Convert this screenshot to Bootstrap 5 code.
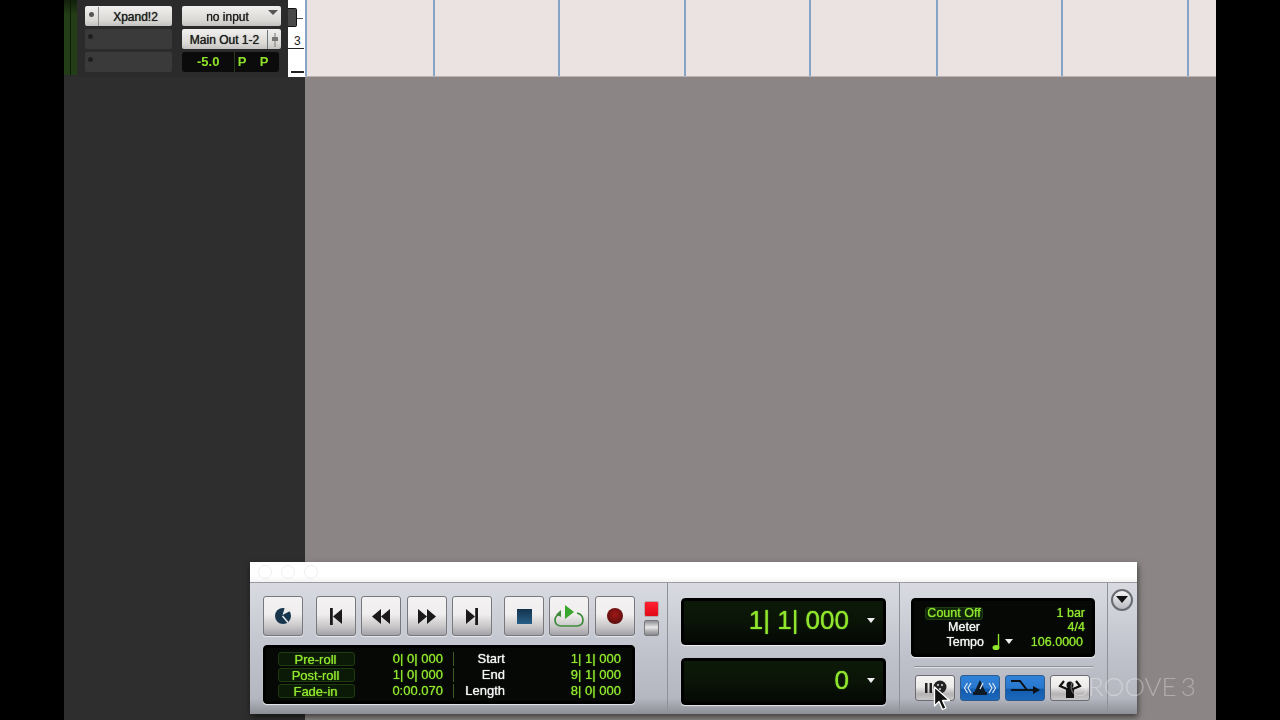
<!doctype html>
<html lang="en">
<head>
<meta charset="utf-8">
<title>Pro Tools transport</title>
<link rel="stylesheet" href="https://cdn.jsdelivr.net/npm/bootstrap@5.3.0/dist/css/bootstrap.min.css">
<style>
html,body{margin:0;height:720px;overflow:hidden;background:#000;font-family:"Liberation Sans",Arial,sans-serif}
.stage{width:1152px;height:720px;margin-left:64px;position:relative;filter:blur(.4px)}
.top-row{height:77px}
.strip{width:224px;background:#2b2b2b}
.meter{width:13px;height:75px;gap:1px;background:#0d1a08}
.meter div{flex:1;background:linear-gradient(#12200a 0,#233d16 20%,#233d16 100%)}
.inserts{width:87px;margin-left:8px;margin-top:6px;gap:3px}
.outs{width:99px;margin-left:10px;margin-top:6px;gap:3px}
.slot{height:20px;border-radius:2px;background:#3a3a3a;font-size:12px;color:#1c1c1c}
.slot.on{background:linear-gradient(#f2f0ee,#dbd9d6 70%,#c4c2c0);text-shadow:0 0 .8px #222;padding-top:1px}
.slot .dotcell{width:14px;height:100%;border-right:1px solid #8d8d8d}
.slot .dot{width:5px;height:5px;border-radius:50%;background:#555;margin-bottom:5px}
.slot.off .dotcell{border:0}
.slot.off .dot{background:#1f1f1f;margin-left:3px}
.vol{height:20px;width:97px;background:#0b0b0b;border-radius:3px;color:#8fe32b;font-size:13px;font-weight:700}
.vol span:first-child{width:52px;padding-left:15px}
.ruler{width:17px;background:#fff;position:relative;font-size:12px;color:#222}
.tab{width:9px;height:19px;margin-top:8px;background:#484848;border:1px solid #111;border-left:0;border-radius:0 2px 2px 0}
.tab-tick{position:absolute;left:9px;top:18px;width:6px;height:1px;background:#555}
.ruler .num{height:22px;line-height:29px;padding-left:6px;border-bottom:1px solid #222;margin-right:1px}
.ruler .tick2{height:1.5px;width:13px;margin:22px 0 0 3px;background:#222}
.bars{flex:1;display:grid;grid-template-columns:127.5px 125px 126px 125px 127px 125px 126px 1fr;background:#ebe2e2;border-bottom:1px solid #b9b3b2}
.bars div{border-left:2px solid #86a4c6}
.bottom{height:643px}
.dark{width:241px;background:#2e2e2e}
.gray{flex:1;background:#8b8685}
.transport{position:absolute;left:186px;top:562px;width:887px;height:152px;box-shadow:1px 3px 6px rgba(0,0,0,.55)}
.titlebar{height:21px;background:linear-gradient(#fff,#fff 70%,#f4f4f4);border-bottom:1px solid #9a9ba0;gap:9px;padding-left:8px}
.titlebar i{width:14px;height:14px;border-radius:50%;border:1px solid #f1eeee;display:block}
.tbody{height:131px;background:linear-gradient(#d8dae0 0,#d4d6dd 12%,#bfc2cb 55%,#b4b7c0 88%,#8d8f96 100%)}
.sec1{width:418px;padding:13px 0 0 13px;border-right:1px solid #8f9198}
.sec2{width:232px;padding:15px 0 0 13px;border-right:1px solid #8f9198}
.sec3{width:208px;padding:15px 0 0 11px;border-right:1px solid #8f9198}
.sec4{flex:1;padding:6px 0 0 3px}
.tbtn{width:40px;height:40px;padding:0;border:1px solid #77777e;border-radius:3px;background:linear-gradient(#f3f1f1,#f0eeee 45%,#c9c6c8 78%,#a3a2a8);box-shadow:0 1px 1px rgba(255,255,255,.6)}
.tbtn:hover{background:linear-gradient(#f3f1f1,#f0eeee 45%,#c9c6c8 78%,#a3a2a8);border-color:#77777e}
.g1{gap:5.3px}
.ml13{margin-left:7.7px}.ml12{margin-left:7px}.ml9{margin-left:3.7px}
.lamps{gap:3px;padding-top:5px}
.lamp{width:15px;height:16px;border-radius:2px;background:linear-gradient(#ff2030,#e20a18);border:1px solid #b9a9ad}
.lamp.off{background:linear-gradient(#8d8d92,#e8e8e8 45%,#b5b5b8 70%,#86868b);border-color:#77777c}
.lcd{background:#050805;border:1px solid #000;border-radius:4px;box-shadow:inset 0 0 0 2px #000,0 1px 1px rgba(255,255,255,.75);color:#90e62d;text-shadow:0 0 1px #90e62d}
.lcd-inner{background:linear-gradient(#0c1a08,#0a1407 50%,#040704)}
.counters{width:372px;height:59px;margin-top:9px;font-size:13px;padding:6px 0 0 14px}
.cgrid{display:grid;grid-template-columns:77px 88px 62px 116px;grid-auto-rows:14px;row-gap:2px;line-height:14px}
.chip{border:1px solid #1f3d10;border-radius:3px;background:#0b1a07;text-align:center;padding-right:2px}
.wht{color:#f4f4f4;text-shadow:0 0 1px #fff}
.lab{border-left:1px solid #3f5a22;margin-left:10px;text-align:right}
.main-c{width:205px;height:47px;font-size:26px;padding:0 10px 2px 0;text-shadow:0 0 1.2px #90e62d}
.main-c .val{width:167px;text-align:right}
.main-c + .main-c{margin-top:13px}
.caret-w{width:0;height:0;border-left:4.5px solid transparent;border-right:4.5px solid transparent;border-top:5px solid #eee;margin-left:18px}
.cpanel{width:184px;height:59px;font-size:12.5px;line-height:13.5px;padding:8px 9px 0 13px}
.cpanel .chip{width:58px;height:13px;line-height:11px;background:#0f2409;padding-right:0}
.cpanel .lb{width:59px;text-align:right}
.caret-s{width:0;height:0;border-left:4px solid transparent;border-right:4px solid transparent;border-top:5px solid #eee;margin:0 0 3px 4px}
.mr3{margin-right:2px}
.sep{height:1px;margin:9px 2px 0 3px;width:179px;background:#8f9198;box-shadow:0 1px 0 rgba(255,255,255,.5)}
.minis{margin:8px 0 0 4px;gap:5px}
.mini{width:40px;height:26px;padding:0;border:1px solid #6c6c72;border-radius:3px;background:linear-gradient(#f5f4f3,#ecebea 45%,#b5b3b3 75%,#c9c8c8)}
.mini.blue{background:linear-gradient(#2f82d8,#2a78cf 50%,#125cae 55%,#1c68bb);border-color:#2f5b8d}
.mini:hover{border-color:#6c6c72}
.roundb{width:22px;height:22px;padding:0;border:2px solid #6a6b70;border-radius:50%;background:linear-gradient(#f4f4f6,#b9bbc2)}
.roundb:hover{border-color:#6a6b70}
.watermark{position:absolute;left:1005px;top:669px;font-family:Lato,"Liberation Sans",sans-serif;font-weight:300;font-size:26px;line-height:34px;color:rgba(255,255,255,.32);word-spacing:-3px}
.cursor{position:absolute;left:869px;top:686px}
</style>
</head>
<body>
<div class="stage">
  <div class="d-flex top-row">
    <div class="strip d-flex">
      <div class="meter d-flex"><div></div><div></div></div>
      <div class="inserts d-flex flex-column">
        <div class="slot on d-flex align-items-center"><span class="dotcell d-flex align-items-center justify-content-center"><span class="dot"></span></span><span class="flex-grow-1 text-center">Xpand!2</span></div>
        <div class="slot off d-flex"><span class="dotcell d-flex align-items-center"><span class="dot"></span></span></div>
        <div class="slot off d-flex"><span class="dotcell d-flex align-items-center"><span class="dot"></span></span></div>
      </div>
      <div class="outs d-flex flex-column">
        <div class="slot on d-flex align-items-center position-relative"><span class="flex-grow-1 text-center pe-2">no input</span><svg class="position-absolute top-0 end-0" width="16" height="12" viewBox="0 0 16 12"><path d="M3 4h10l-5 5z" fill="#555"/></svg></div>
        <div class="slot on d-flex align-items-center"><span class="flex-grow-1 text-center">Main Out 1-2</span><span class="border-start border-secondary h-100 d-flex align-items-center justify-content-center" style="width:14px"><svg width="8" height="14" viewBox="0 0 8 14"><path d="M4 0v14" stroke="#777"/><rect x="1" y="4" width="6" height="4" fill="#777"/></svg></span></div>
        <div class="vol d-flex align-items-center"><span>-5.0</span><span class="border-start text-center" style="width:15px;border-color:#2a3a18!important">P</span><span class="text-center" style="width:30px">P</span></div>
      </div>
    </div>
    <div class="ruler">
      <div class="tab"></div><div class="tab-tick"></div>
      <div class="num">3</div>
      <div class="tick2"></div>
    </div>
    <div class="bars"><div></div><div></div><div></div><div></div><div></div><div></div><div></div><div></div></div>
  </div>
  <div class="d-flex bottom"><div class="dark"></div><div class="gray"></div></div>

  <div class="transport">
    <div class="titlebar d-flex align-items-center"><i></i><i></i><i></i></div>
    <div class="tbody d-flex">
      <div class="sec1">
        <div class="d-flex g1">
          <button class="btn tbtn d-flex align-items-center justify-content-center"><svg width="18" height="18" viewBox="0 0 18 18"><circle cx="9" cy="9" r="8" fill="#17364d"/><path d="M8.500 8 11 0l7 3z" fill="#ecebea"/><path d="M8.500 9 14 15.500" stroke="#ecebea" stroke-width="1.500"/></svg></button>
          <button class="btn tbtn ml13 d-flex align-items-center justify-content-center"><svg width="14" height="17" viewBox="0 0 14 17"><rect x="1" width="2.800" height="17" fill="#1a1a1a"/><path d="M13 1v15L4 8.500z" fill="#1a1a1a"/></svg></button>
          <button class="btn tbtn d-flex align-items-center justify-content-center"><svg width="20" height="15" viewBox="0 0 20 15"><path d="M10 0v15L1 7.500zM19 0v15l-9-7.500z" fill="#1a1a1a"/></svg></button>
          <button class="btn tbtn d-flex align-items-center justify-content-center"><svg width="20" height="15" viewBox="0 0 20 15"><path d="M1 0v15l9-7.500zM10 0v15l9-7.500z" fill="#1a1a1a"/></svg></button>
          <button class="btn tbtn d-flex align-items-center justify-content-center"><svg width="14" height="17" viewBox="0 0 14 17"><path d="M1 1v15l9-7.500z" fill="#1a1a1a"/><rect x="10.200" width="2.800" height="17" fill="#1a1a1a"/></svg></button>
          <button class="btn tbtn ml12 d-flex align-items-center justify-content-center"><svg width="15" height="15" viewBox="0 0 15 15"><defs><linearGradient id="st" x1="0" y1="0" x2="0" y2="1"><stop offset="0" stop-color="#12334d"/><stop offset="1" stop-color="#2a5f88"/></linearGradient></defs><rect width="15" height="15" fill="url(#st)"/></svg></button>
          <button class="btn tbtn d-flex align-items-center justify-content-center"><svg width="30" height="24" viewBox="0 0 30 24"><path d="M6 10C3 11 1 13 1 16s2 6 6 6h16c4 0 6-3 6-6s-2-6-6-7" fill="none" stroke="#3f8b3c" stroke-width="1.700"/><path d="M7 6v7l-5-2.500z" fill="#3f8b3c"/><path d="M11 1v14l9-7z" fill="#38a62c"/></svg></button>
          <button class="btn tbtn d-flex align-items-center justify-content-center"><svg width="18" height="18" viewBox="0 0 18 18"><defs><radialGradient id="rc" cx=".5" cy=".4" r=".6"><stop offset="0" stop-color="#a01818"/><stop offset="1" stop-color="#5c0d0d"/></radialGradient></defs><circle cx="9" cy="9" r="8" fill="url(#rc)"/></svg></button>
          <div class="lamps ml9 d-flex flex-column"><div class="lamp"></div><div class="lamp off"></div></div>
        </div>
        <div class="lcd counters">
          <div class="cgrid">
            <div class="chip">Pre-roll</div><div class="text-end">0| 0| 000</div><div class="lab wht">Start</div><div class="text-end">1| 1| 000</div>
            <div class="chip">Post-roll</div><div class="text-end">1| 0| 000</div><div class="lab wht">End</div><div class="text-end">9| 1| 000</div>
            <div class="chip">Fade-in</div><div class="text-end">0:00.070</div><div class="lab wht">Length</div><div class="text-end">8| 0| 000</div>
          </div>
        </div>
      </div>
      <div class="sec2">
        <div class="lcd lcd-inner main-c d-flex align-items-center"><span class="val">1| 1| 000</span><span class="caret-w"></span></div>
        <div class="lcd lcd-inner main-c d-flex align-items-center"><span class="val">0</span><span class="caret-w"></span></div>
      </div>
      <div class="sec3">
        <div class="lcd cpanel">
          <div class="d-flex justify-content-between"><span class="chip">Count Off</span><span>1 bar</span></div>
          <div class="d-flex justify-content-between"><span class="lb wht pe-1">Meter</span><span>4/4</span></div>
          <div class="d-flex align-items-center"><span class="lb wht">Tempo</span><svg class="ms-2" width="9" height="17" viewBox="0 0 9 17"><path d="M6.500 0v13" stroke="#90e62d" stroke-width="1.400"/><ellipse cx="4" cy="13.500" rx="3.500" ry="2.600" fill="#90e62d"/></svg><span class="caret-s"></span><span class="ms-auto mr3">106.0000</span></div>
        </div>
        <div class="sep"></div>
        <div class="minis d-flex">
          <button class="btn mini d-flex align-items-center justify-content-center"><svg width="30" height="16" viewBox="0 0 30 16"><rect x="5" y="3" width="2.500" height="10" fill="#222"/><rect x="9.500" y="3" width="2.500" height="10" fill="#222"/><circle cx="20" cy="7" r="6.500" fill="#222"/><circle cx="18" cy="5" r="1" fill="#ddd"/><circle cx="22" cy="5" r="1" fill="#ddd"/><circle cx="20" cy="9" r="1" fill="#ddd"/></svg></button>
          <button class="btn mini blue d-flex align-items-center justify-content-center"><svg width="34" height="18" viewBox="0 0 34 18"><path d="M17 1l6 13H11z" fill="#0e1a26"/><path d="M10 13h14v3H10z" fill="#0e1a26"/><path d="M17 10l3-6" stroke="#e8eef6" stroke-width="1.200"/><path d="M8 4 5 9l3 5M4.500 4 1.500 9l3 5M26 4l3 5-3 5M29.500 4l3 5-3 5" fill="none" stroke="#dfe8f4" stroke-width="1.200"/></svg></button>
          <button class="btn mini blue d-flex align-items-center justify-content-center"><svg width="32" height="18" viewBox="0 0 32 18"><path d="M2 2h9l7 9" fill="none" stroke="#0c1014" stroke-width="2"/><path d="M2 11h24" stroke="#0c1014" stroke-width="1.800"/><path d="M24 7l7 4-7 4z" fill="#0c1014"/></svg></button>
          <button class="btn mini d-flex align-items-center justify-content-center"><svg width="28" height="20" viewBox="0 0 28 20"><path d="M10 10h8v10h-8z" fill="#111"/><path d="M11 11 4 8 8 3M17 11l7-3-4-5" fill="none" stroke="#111" stroke-width="2.200"/><circle cx="14" cy="7" r="3.500" fill="#111"/></svg></button>
        </div>
      </div>
      <div class="sec4">
        <button class="btn roundb d-flex align-items-center justify-content-center"><svg width="12" height="8" viewBox="0 0 12 8"><path d="M0 0h12L6 7z" fill="#111"/></svg></button>
      </div>
    </div>
  </div>

  <div class="watermark">GROOVE 3</div>
  <svg class="cursor" width="17" height="26" viewBox="0 0 17 26"><path d="M1.500 1v19l4.500-4.500 3.500 8 3.500-1.500-3.500-7.500h7z" fill="#111" stroke="#fff" stroke-width="1.300" stroke-linejoin="round"/></svg>
</div>
</body>
</html>
